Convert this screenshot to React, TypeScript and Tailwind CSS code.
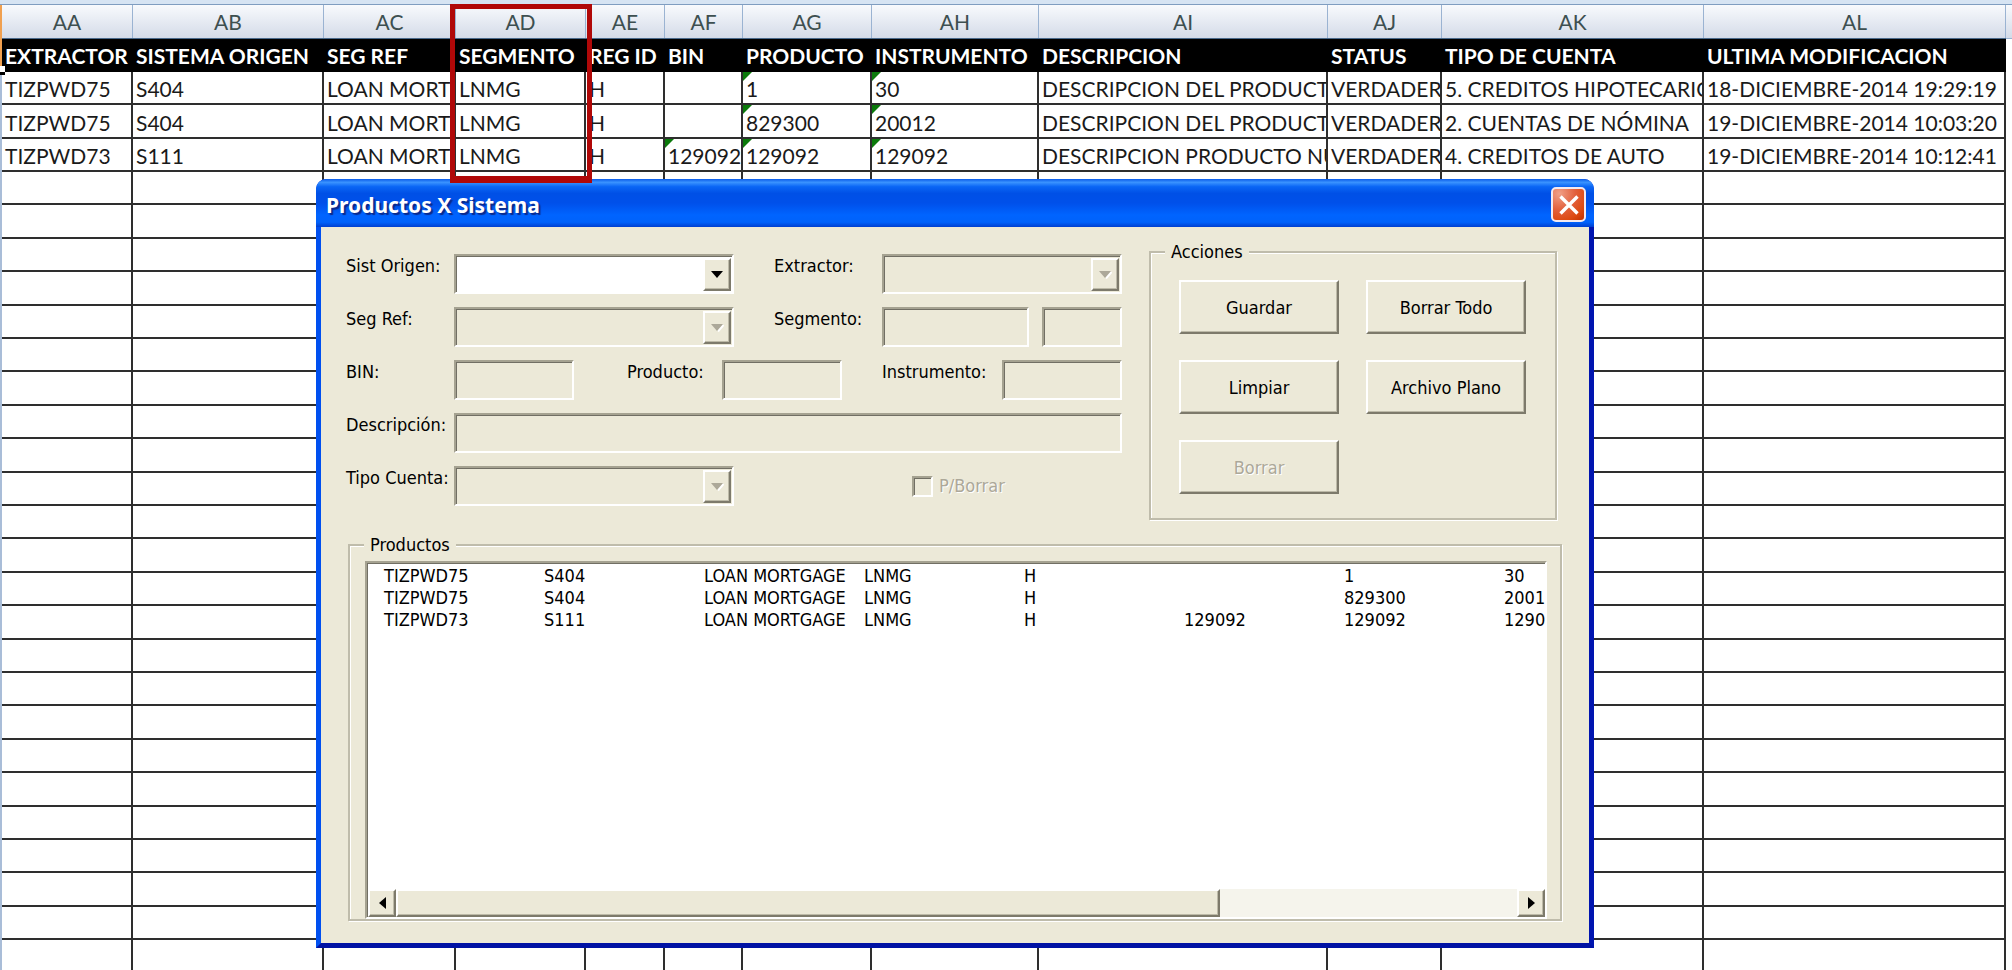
import React from "react";

const COLUMNS = [
  { letter: "AA", title: "EXTRACTOR", width: "w-[131px]" },
  { letter: "AB", title: "SISTEMA ORIGEN", width: "w-[191px]" },
  { letter: "AC", title: "SEG REF", width: "w-[132px]" },
  { letter: "AD", title: "SEGMENTO", width: "w-[130px]" },
  { letter: "AE", title: "REG ID", width: "w-[79px]" },
  { letter: "AF", title: "BIN", width: "w-[78px]" },
  { letter: "AG", title: "PRODUCTO", width: "w-[129px]" },
  { letter: "AH", title: "INSTRUMENTO", width: "w-[167px]" },
  { letter: "AI", title: "DESCRIPCION", width: "w-[289px]" },
  { letter: "AJ", title: "STATUS", width: "w-[114px]" },
  { letter: "AK", title: "TIPO DE CUENTA", width: "w-[262px]" },
  { letter: "AL", title: "ULTIMA MODIFICACION", width: "w-[302px]" },
];

const ROWS = [
  ["TIZPWD75", "S404", "LOAN MORTGAGE", "LNMG", "H", "", "1", "30", "DESCRIPCION DEL PRODUCTO", "VERDADERO", "5. CREDITOS HIPOTECARIOS", "18-DICIEMBRE-2014 19:29:19"],
  ["TIZPWD75", "S404", "LOAN MORTGAGE", "LNMG", "H", "", "829300", "20012", "DESCRIPCION DEL PRODUCTO", "VERDADERO", "2. CUENTAS DE NÓMINA", "19-DICIEMBRE-2014 10:03:20"],
  ["TIZPWD73", "S111", "LOAN MORTGAGE", "LNMG", "H", "129092", "129092", "129092", "DESCRIPCION PRODUCTO NUEVO", "VERDADERO", "4. CREDITOS DE AUTO", "19-DICIEMBRE-2014 10:12:41"],
];

const EMPTY_ROWS = 24;

const rowHeight = "h-[33px] nth-[5n+2]:h-[34px] nth-[5n]:h-[34px]";
const sunken =
  "border-2 border-t-[#a5a291] border-l-[#a5a291] border-r-white border-b-white shadow-[inset_1px_1px_0_#716f64]";
const raised =
  "border-2 border-t-white border-l-white border-r-[#7d7a6b] border-b-[#7d7a6b] shadow-[inset_-1px_-1px_0_#bdbaa8]";

// numbers stored as text get the green corner
function isTextNumber(value: string) {
  return /^\d+$/.test(value);
}

function Sheet() {
  return (
    <div className="flex h-full flex-col font-[Lato,sans-serif] text-[21px] leading-[29px] text-[#1a1a1a]">
      <div className="h-[5px] shrink-0 border-b border-[#7f9dc0] bg-[#d6e4f3]" />
      <div className="flex">
        <div className="flex w-[2px] shrink-0 flex-col">
          <div className="h-[67px] bg-[#f0a050]" />
          <div className="flex-1 bg-[#a9bdd8]" />
        </div>
        <table className="w-full table-fixed border-separate border-spacing-0">
          <colgroup>
            {COLUMNS.map((col) => (
              <col key={col.letter} className={col.width} />
            ))}
            <col />
          </colgroup>
          <thead>
            <tr className="h-[33px]">
              {COLUMNS.map((col) => (
                <th
                  key={col.letter}
                  className="border-r border-[#9ab3d2] bg-linear-to-b from-[#f8fafd] to-[#d4dbe8] p-0 text-center font-normal text-[#3d4f50]"
                >
                  {col.letter}
                </th>
              ))}
              <th className="bg-linear-to-b from-[#f8fafd] to-[#d4dbe8] p-0" />
            </tr>
            <tr className="h-[34px]">
              {COLUMNS.map((col) => (
                <th
                  key={col.title}
                  className="overflow-hidden border-t border-[#4a6a8c] bg-black p-0 pl-[3px] text-left font-bold whitespace-nowrap text-white"
                >
                  {col.title}
                </th>
              ))}
              <th className="border-t border-[#9ab3d2] p-0" />
            </tr>
          </thead>
          <tbody>
            {ROWS.map((row, r) => (
              <tr key={r} className={rowHeight}>
                {row.map((value, c) => (
                  <td
                    key={c}
                    className="relative overflow-hidden border-r-2 border-b-2 border-[#2e2e2e] p-0 pt-[2px] pl-[3px] whitespace-nowrap"
                  >
                    {isTextNumber(value) && (
                      <svg className="absolute top-0 left-0" width="9" height="9" viewBox="0 0 9 9">
                        <path d="M0 0h9L0 9z" fill="#0b7a0b" />
                      </svg>
                    )}
                    {value}
                  </td>
                ))}
                <td />
              </tr>
            ))}
            {Array.from({ length: EMPTY_ROWS }, (_, r) => (
              <tr key={r + ROWS.length} className={rowHeight}>
                {COLUMNS.map((col) => (
                  <td key={col.letter} className="border-r-2 border-b-2 border-[#2e2e2e] p-0" />
                ))}
                <td />
              </tr>
            ))}
          </tbody>
        </table>
      </div>
    </div>
  );
}

function Label({ htmlFor, className, children }: { htmlFor: string; className: string; children: React.ReactNode }) {
  return (
    <label htmlFor={htmlFor} className={`shrink-0 whitespace-nowrap leading-6 ${className}`}>
      {children}
    </label>
  );
}

function TextField({ id, className, label }: { id: string; className: string; label?: string }) {
  return <input id={id} type="text" disabled aria-label={label} className={`h-10 min-w-0 bg-[#ece9d8] px-1 ${sunken} ${className}`} />;
}

function Combo({ id, className, disabled }: { id: string; className: string; disabled?: boolean }) {
  return (
    <div className={`relative h-10 ${className}`}>
      <select
        id={id}
        disabled={disabled}
        className={`h-full w-full appearance-none px-1 opacity-100 ${disabled ? "bg-[#ece9d8]" : "bg-white"} ${sunken}`}
      />
      <span
        className={`pointer-events-none absolute top-1 right-[3px] bottom-[3px] flex w-7 items-center justify-center bg-[#ece9d8] ${raised}`}
      >
        <svg width="13" height="8" viewBox="0 0 13 8">
          {disabled && <path d="M12.500 1L7 7.500" stroke="#fff" strokeWidth="2" />}
          <path d="M0 0h12L6 7z" fill={disabled ? "#aca899" : "#000"} />
        </svg>
      </span>
    </div>
  );
}

function Group({ title, className, children }: { title: string; className?: string; children: React.ReactNode }) {
  return (
    <fieldset
      className={`min-w-0 border-2 border-[#bfbcab] shadow-[1px_1px_0_#fff,inset_1px_1px_0_#fff] ${className ?? ""}`}
    >
      <legend className="ml-[14px] bg-[#ece9d8] px-[6px] leading-6">{title}</legend>
      {children}
    </fieldset>
  );
}

function ActionButton({ disabled, children }: { disabled?: boolean; children: React.ReactNode }) {
  return (
    <button
      type="button"
      disabled={disabled}
      className={`h-[54px] w-[160px] bg-[#ece9d8] disabled:text-[#aca899] disabled:[text-shadow:1px_1px_0_#fff] ${raised}`}
    >
      {children}
    </button>
  );
}

function ProductForm() {
  return (
    <form className="mt-[14px] flex min-w-0 flex-1 flex-col gap-[13px]">
      <div className="flex items-start">
        <Label htmlFor="sist-origen" className="w-[108px]">Sist Origen:</Label>
        <Combo id="sist-origen" className="w-[280px]" />
        <Label htmlFor="extractor" className="ml-auto w-[108px]">Extractor:</Label>
        <Combo id="extractor" className="w-[240px]" disabled />
      </div>
      <div className="flex items-start">
        <Label htmlFor="seg-ref" className="w-[108px]">Seg Ref:</Label>
        <Combo id="seg-ref" className="w-[280px]" disabled />
        <Label htmlFor="segmento" className="ml-auto w-[108px]">Segmento:</Label>
        <TextField id="segmento" className="w-[147px]" />
        <TextField id="segmento-reg" className="ml-[13px] w-[80px]" label="Reg ID" />
      </div>
      <div className="flex items-start">
        <Label htmlFor="bin" className="w-[108px]">BIN:</Label>
        <TextField id="bin" className="w-[120px]" />
        <Label htmlFor="producto" className="ml-[53px] w-[95px]">Producto:</Label>
        <TextField id="producto" className="w-[120px]" />
        <Label htmlFor="instrumento" className="ml-auto w-[120px]">Instrumento:</Label>
        <TextField id="instrumento" className="w-[120px]" />
      </div>
      <div className="flex items-start">
        <Label htmlFor="descripcion" className="w-[108px]">Descripción:</Label>
        <TextField id="descripcion" className="flex-1" />
      </div>
      <div className="flex items-start">
        <Label htmlFor="tipo-cuenta" className="w-[108px]">Tipo Cuenta:</Label>
        <Combo id="tipo-cuenta" className="w-[280px]" disabled />
        <div className="ml-auto flex w-[210px] items-center gap-[6px] pt-2">
          <input id="p-borrar" type="checkbox" disabled className={`size-[21px] appearance-none ${sunken}`} />
          <label htmlFor="p-borrar" className="leading-6 text-[#aca899] [text-shadow:1px_1px_0_#fff]">
            P/Borrar
          </label>
        </div>
      </div>
    </form>
  );
}

function ScrollButton({ label, path }: { label: string; path: string }) {
  return (
    <button
      type="button"
      aria-label={label}
      className={`flex w-7 shrink-0 items-center justify-center bg-[#ece9d8] ${raised}`}
    >
      <svg width="7" height="12" viewBox="0 0 7 12">
        <path d={path} fill="#000" />
      </svg>
    </button>
  );
}

function ProductList() {
  return (
    <div className={`flex h-[358px] flex-col bg-white ${sunken}`}>
      <div className="flex-1 overflow-hidden pt-[2px] pl-[17px]">
        <table className="w-[1280px] table-fixed border-separate border-spacing-0 leading-[22px]">
          <tbody>
            {ROWS.map((row, r) => (
              <tr key={r}>
                {row.slice(0, 8).map((value, c) => (
                  <td key={c} className="w-[160px] p-0 whitespace-nowrap">
                    {value}
                  </td>
                ))}
              </tr>
            ))}
          </tbody>
        </table>
      </div>
      <div className="ml-px flex h-7 shrink-0 bg-[#f5f4ec]">
        <ScrollButton label="Desplazar a la izquierda" path="M7 0v12L0 6z" />
        <div className={`w-[70%] bg-[#ece9d8] ${raised}`} />
        <div className="flex-1" />
        <ScrollButton label="Desplazar a la derecha" path="M0 0v12l7-6z" />
      </div>
    </div>
  );
}

function ProductDialog() {
  return (
    <div
      role="dialog"
      aria-labelledby="dialog-title"
      className="absolute top-[179px] right-[418px] left-[316px] overflow-hidden rounded-t-[10px] bg-[#0a2fd8] font-['DejaVu_Sans_Condensed','DejaVu_Sans',sans-serif] text-[18px] text-black"
    >
      <div className="flex h-12 items-center justify-between bg-[linear-gradient(to_bottom,#0a5be8_0%,#3a93ff_7%,#0a66f5_16%,#0050e6_30%,#0050ea_50%,#0064ff_75%,#0062fb_90%,#003fd0_100%)] pr-2 pl-[10px]">
        <h1
          id="dialog-title"
          className="pt-[6px] font-['Noto_Sans',sans-serif] text-[21px] font-bold text-white [text-shadow:2px_2px_1px_#0a2a8c]"
        >
          Productos X Sistema
        </h1>
        <button
          type="button"
          aria-label="Cerrar"
          className="mt-[3px] flex size-[35px] items-center justify-center rounded-[5px] border-2 border-[#f3e9f0] bg-[radial-gradient(circle_at_20%_15%,#f0a088_0%,#e2603c_45%,#dd4a12_75%,#c03000_100%)]"
        >
          <svg width="20" height="20" viewBox="0 0 20 20">
            <path d="M1.500 1.500l17 17M18.500 1.500l-17 17" stroke="#fff" strokeWidth="3.400" />
          </svg>
        </button>
      </div>
      <div className="border-x-[5px] border-b-[5px] border-r-[#0015b0] border-b-[#0012a4] border-l-[#0050f0] bg-[#ece9d8] pt-[13px] pb-[22px]">
        <div className="flex items-start gap-[27px] pr-8 pl-[25px]">
          <ProductForm />
          <Group title="Acciones">
            <div className="grid grid-cols-2 gap-x-[27px] gap-y-[26px] pt-4 pr-[29px] pb-6 pl-7">
              <ActionButton>Guardar</ActionButton>
              <ActionButton>Borrar Todo</ActionButton>
              <ActionButton>Limpiar</ActionButton>
              <ActionButton>Archivo Plano</ActionButton>
              <ActionButton disabled>Borrar</ActionButton>
            </div>
          </Group>
        </div>
        <Group title="Productos" className="mx-[27px] mt-[13px]">
          <div className="pt-1 pr-[13px] pl-[15px]">
            <ProductList />
          </div>
        </Group>
      </div>
    </div>
  );
}

export default function App() {
  return (
    <div className="relative h-screen min-h-[950px] w-full overflow-hidden bg-white">
      <Sheet />
      {/* corner handle of the selected row header */}
      <div className="absolute top-[66px] left-0 h-[9px] w-[5px] border-b-[3px] border-black bg-white" />
      <ProductDialog />
      {/* marks the SEGMENTO column */}
      <div className="pointer-events-none absolute top-1 left-[450px] h-[179px] w-[142px] border-[5px] border-b-[7px] border-[#b00808]" />
    </div>
  );
}
